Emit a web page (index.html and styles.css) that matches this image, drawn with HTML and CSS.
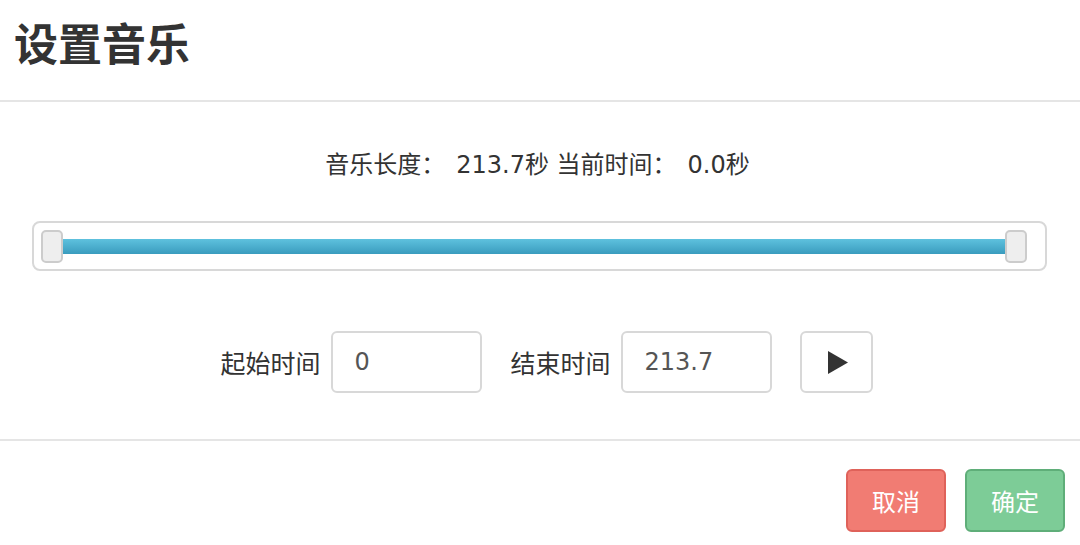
FILE: index.html
```html
<!DOCTYPE html>
<html lang="zh-CN">
<head>
    <meta charset="UTF-8">
    <meta name="viewport" content="width=device-width, initial-scale=1.0">
    <title>设置音乐</title>
    <link rel="stylesheet" href="styles.css">
</head>
<body>
    <div class="modal-header">
        <h1>设置音乐</h1>
    </div>
    <div class="modal-body">
        <div class="info">音乐长度<span class="colon">：</span>213.7秒 当前时间<span class="colon">：</span>0.0秒</div>
        <div class="slider">
            <div class="handle"></div>
            <div class="range"></div>
            <div class="handle"></div>
        </div>
        <div class="controls">
            <label for="start">起始时间</label>
            <input type="text" id="start" value="0">
            <label for="end" class="gap">结束时间</label>
            <input type="text" id="end" value="213.7">
            <button class="play" type="button">
                <svg width="20" height="23" viewBox="0 0 20 23"><path d="M0 0 L20 11.5 L0 23 Z" fill="#333"/></svg>
            </button>
        </div>
    </div>
    <div class="modal-footer">
        <button class="btn cancel" type="button">取消</button>
        <button class="btn ok" type="button">确定</button>
    </div>
</body>
</html>
```

FILE: styles.css
```css
body {
    margin: 0;
    font-family: "DejaVu Sans", "Noto Sans CJK SC", sans-serif;
    color: #333;
    background-color: #fff;
}
.modal-header {
    height: 102px;
    box-sizing: border-box;
    padding: 12px 14px 0;
    border-bottom: 2px solid #e5e5e5;
}
.modal-header h1 {
    margin: 0;
    font-family: "Noto Sans CJK SC", sans-serif;
    font-size: 44px;
    line-height: 60px;
    font-weight: bold;
    color: #333;
}
.modal-body {
    height: 337px;
    box-sizing: border-box;
    padding: 46px 33px 0 32px;
}
.info {
    text-align: center;
    font-size: 24px;
    line-height: 34px;
    padding-right: 4px;
}
.info .colon {
    margin-right: 11px;
}
.slider {
    margin-top: 39px;
    height: 50px;
    box-sizing: border-box;
    border: 2px solid #d8d8d8;
    border-radius: 8px;
    display: flex;
    align-items: center;
    padding: 0 18px 0 7px;
}
.handle {
    width: 22px;
    height: 33px;
    box-sizing: border-box;
    background-color: #eee;
    border: 2px solid #ccc;
    border-radius: 5px;
    flex-shrink: 0;
}
.range {
    flex: 1;
    height: 15px;
    background: linear-gradient(#5ec1de, #3a9cbe);
}
.controls {
    margin-top: 60px;
    display: flex;
    justify-content: center;
    align-items: center;
    padding-left: 14px;
}
.controls label {
    font-size: 25px;
    margin-right: 10px;
}
.controls label.gap {
    margin-left: 29px;
}
.controls input {
    width: 151px;
    height: 62px;
    box-sizing: border-box;
    border: 2px solid #d8d8d8;
    border-radius: 6px;
    padding: 0 22px;
    font-family: inherit;
    font-size: 24px;
    color: #555;
    outline: none;
}
.play {
    margin-left: 28px;
    width: 73px;
    height: 62px;
    background-color: #fff;
    border: 2px solid #d8d8d8;
    border-radius: 6px;
    display: flex;
    align-items: center;
    justify-content: center;
    padding: 0 0 0 3px;
}
.modal-footer {
    border-top: 2px solid #e5e5e5;
    padding: 28px 15px 0 0;
    display: flex;
    justify-content: flex-end;
    gap: 19px;
}
.btn {
    width: 100px;
    height: 63px;
    border-radius: 6px;
    font-family: "Noto Sans CJK SC", sans-serif;
    font-size: 24px;
    color: #fff;
    padding: 0;
}
.cancel {
    background-color: #f17c73;
    border: 2px solid #df625a;
}
.ok {
    background-color: #7dcc97;
    border: 2px solid #5fae79;
}
```
